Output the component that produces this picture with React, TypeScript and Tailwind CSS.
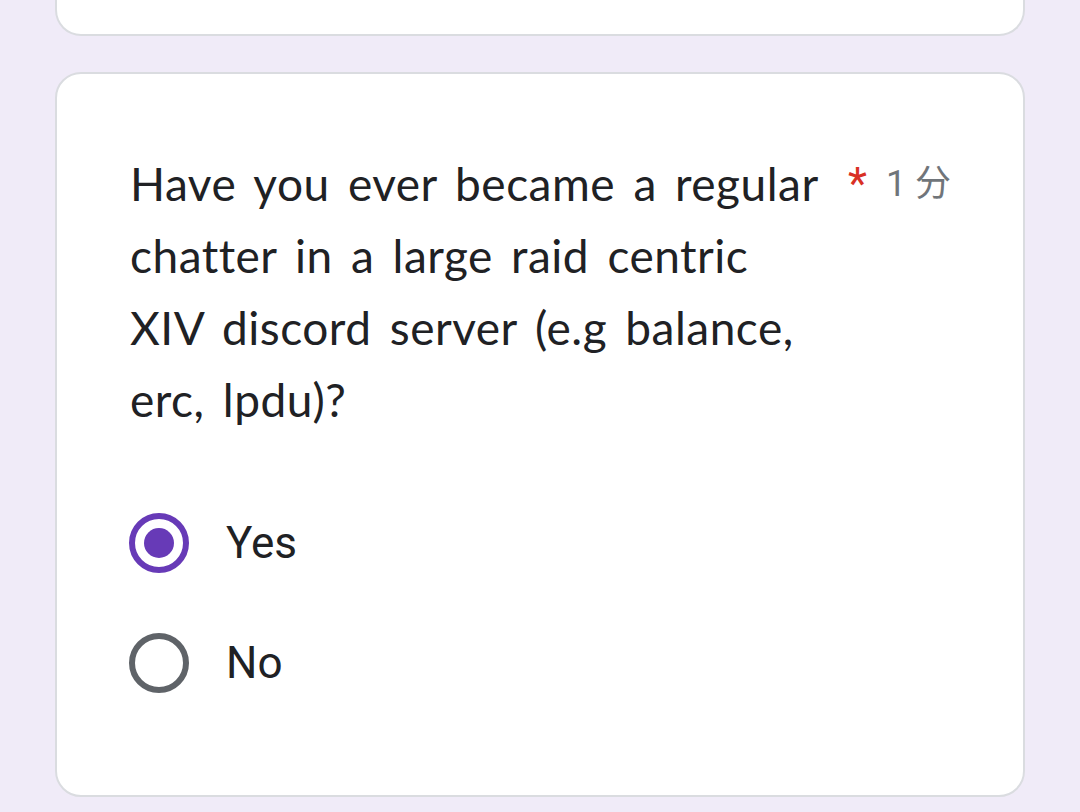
const questionLines = [
  'Have you ever became a regular',
  'chatter in a large raid centric',
  'XIV discord server (e.g balance,',
  'erc, lpdu)?',
];

const options = [
  { label: 'Yes', checked: true },
  { label: 'No', checked: false },
];

const Radio = ({ checked }: { checked: boolean }) => (
  <div
    className={`w-[60px] h-[60px] rounded-full border-[6px] flex items-center justify-center shrink-0 ${
      checked ? 'border-[#673ab7]' : 'border-[#5f6368]'
    }`}
  >
    {checked && <div className="w-[30px] h-[30px] rounded-full bg-[#673ab7]" />}
  </div>
);

const App = () => {
  return (
    <div className="h-[812px] w-[1080px] overflow-hidden bg-[#f0ebf8] px-[55px] flex flex-col">
      <div className="h-[36px] shrink-0 bg-white border-x-2 border-b-2 border-[#dadce0] rounded-b-[26px]" />

      <div className="mt-[36px] h-[725px] shrink-0 bg-white border-2 border-[#dadce0] rounded-[26px] pl-[73px] pt-[74px]">
        <div className="flex items-start">
          <div
            className="w-[710px] text-[46px] leading-[72px] text-[#202124] tracking-[0.5px] [word-spacing:6px]"
            style={{ fontFamily: 'Lato, "Noto Sans", sans-serif' }}
          >
            {questionLines.map((line) => (
              <div key={line}>{line}</div>
            ))}
          </div>
          <span
            className="ml-[8px] text-[44px] leading-[72px] text-[#d93025]"
            style={{ fontFamily: 'Roboto, sans-serif' }}
          >
            *
          </span>
          <span
            className="ml-[19px] text-[36px] leading-[72px] text-[#70757a]"
            style={{ fontFamily: 'Roboto, "Noto Sans CJK SC", sans-serif' }}
          >
            1 分
          </span>
        </div>

        <div className="mt-[77px] flex flex-col gap-[60px]">
          {options.map((o) => (
            <div key={o.label} className="flex items-center gap-[37px] -ml-[1px]">
              <Radio checked={o.checked} />
              <span
                className="text-[44px] leading-[60px] text-[#202124]"
                style={{ fontFamily: 'Roboto, sans-serif' }}
              >
                {o.label}
              </span>
            </div>
          ))}
        </div>
      </div>
    </div>
  );
};

export default App;
